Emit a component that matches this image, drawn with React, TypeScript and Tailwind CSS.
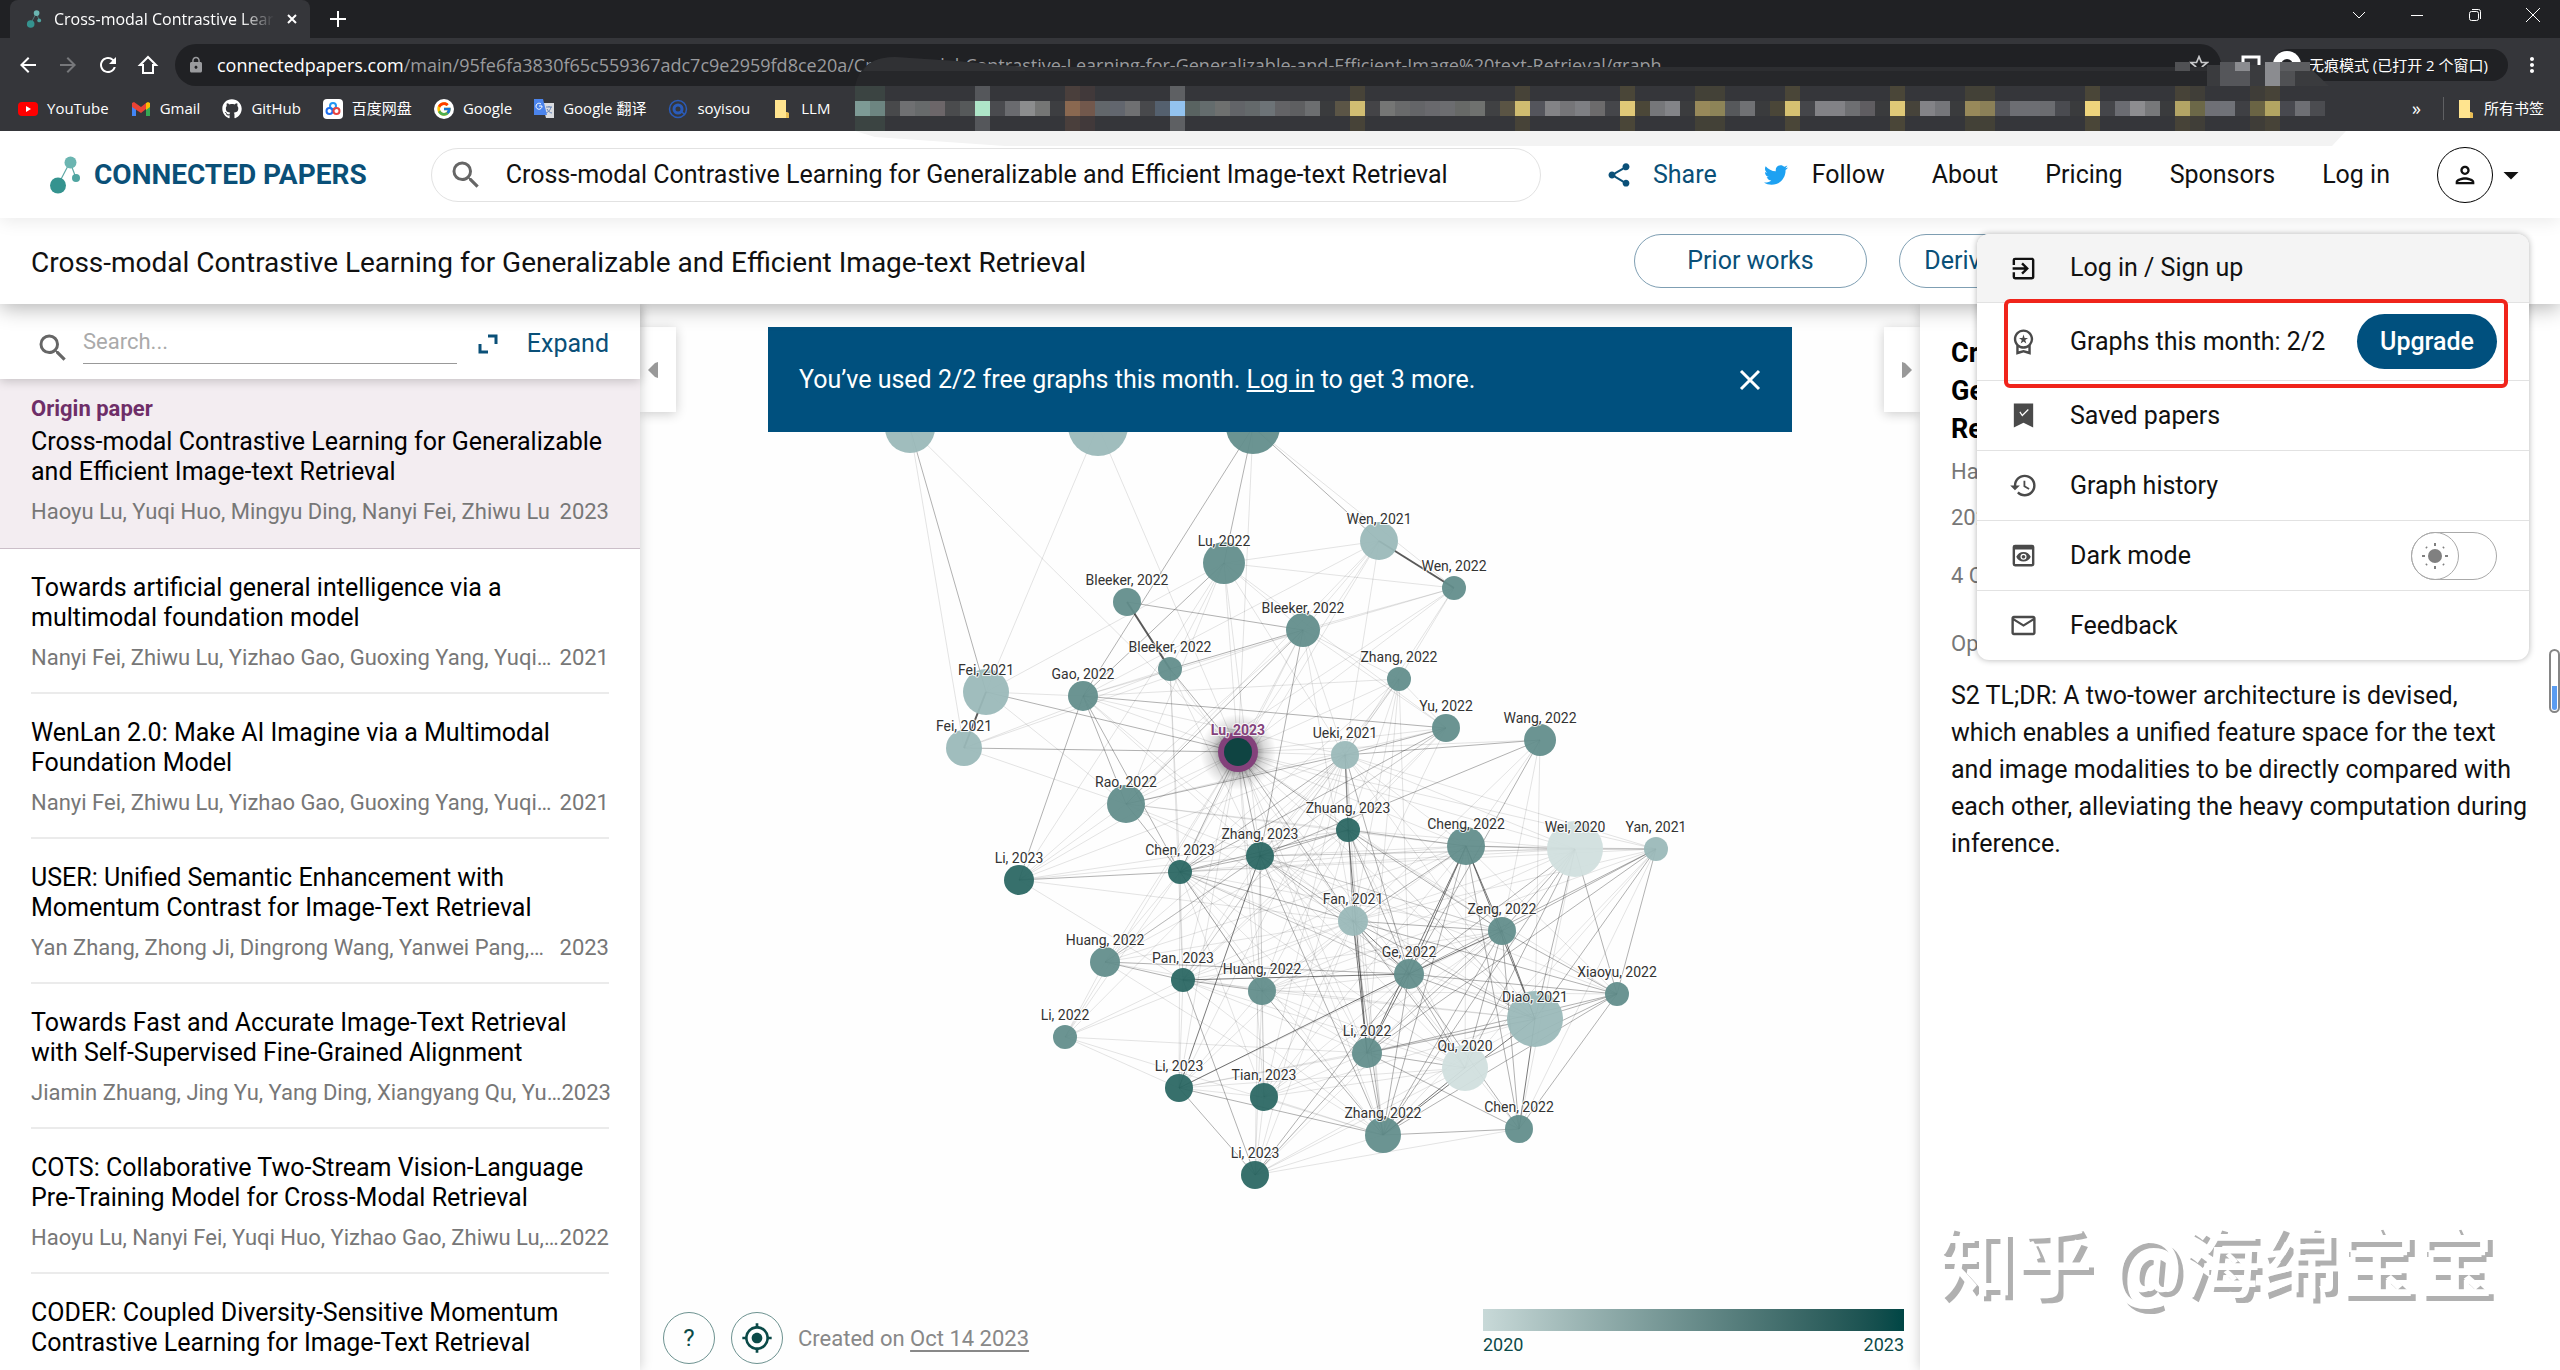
import { ReactNode } from 'react';
import {
  MdArrowBack, MdArrowForward, MdRefresh, MdLock, MdSearch, MdShare, MdOutlinePerson, MdArrowDropDown,
  MdExitToApp, MdOutlineWorkspacePremium, MdHistory, MdPreview, MdMailOutline, MdGpsFixed, MdMoreVert,
} from 'react-icons/md';
import { FaGithub, FaTwitter } from 'react-icons/fa';
import { FcGoogle } from 'react-icons/fc';

type Paper = { title: string; authors: string; year: number };

const origin: Paper = {
  title: 'Cross-modal Contrastive Learning for Generalizable and Efficient Image-text Retrieval',
  authors: 'Haoyu Lu, Yuqi Huo, Mingyu Ding, Nanyi Fei, Zhiwu Lu',
  year: 2023,
};

const papers: Paper[] = [
  { title: 'Towards artificial general intelligence via a multimodal foundation model', authors: 'Nanyi Fei, Zhiwu Lu, Yizhao Gao, Guoxing Yang, Yuqi…', year: 2021 },
  { title: 'WenLan 2.0: Make AI Imagine via a Multimodal Foundation Model', authors: 'Nanyi Fei, Zhiwu Lu, Yizhao Gao, Guoxing Yang, Yuqi…', year: 2021 },
  { title: 'USER: Unified Semantic Enhancement with Momentum Contrast for Image-Text Retrieval', authors: 'Yan Zhang, Zhong Ji, Dingrong Wang, Yanwei Pang,…', year: 2023 },
  { title: 'Towards Fast and Accurate Image-Text Retrieval with Self-Supervised Fine-Grained Alignment', authors: 'Jiamin Zhuang, Jing Yu, Yang Ding, Xiangyang Qu, Yu…', year: 2023 },
  { title: 'COTS: Collaborative Two-Stream Vision-Language Pre-Training Model for Cross-Modal Retrieval', authors: 'Haoyu Lu, Nanyi Fei, Yuqi Huo, Yizhao Gao, Zhiwu Lu,…', year: 2022 },
  { title: 'CODER: Coupled Diversity-Sensitive Momentum Contrastive Learning for Image-Text Retrieval', authors: 'Haoran Wang, Dongliang He, Wenhao Wu, Boyang Xia…', year: 2022 },
];

// id: [x, y, radius, year, label]
const nodes: Record<string, [number, number, number, number, string]> = {
  t1: [270, 124, 25, 2021, ''],
  t2: [458, 122, 30, 2021, ''],
  t3: [613, 123, 27, 2022, ''],
  lu22: [584, 259, 21, 2022, 'Lu, 2022'],
  ba: [487, 298, 14, 2022, 'Bleeker, 2022'],
  bb: [663, 326, 17, 2022, 'Bleeker, 2022'],
  bc: [530, 365, 12, 2022, 'Bleeker, 2022'],
  feiA: [346, 388, 23, 2021, 'Fei, 2021'],
  feiB: [324, 444, 18, 2021, 'Fei, 2021'],
  gao: [443, 392, 15, 2022, 'Gao, 2022'],
  rao: [486, 500, 19, 2022, 'Rao, 2022'],
  liA: [379, 576, 15, 2023, 'Li, 2023'],
  chA: [540, 568, 12, 2023, 'Chen, 2023'],
  zh23: [620, 552, 14, 2023, 'Zhang, 2023'],
  wen21: [739, 237, 19, 2021, 'Wen, 2021'],
  wen22: [814, 284, 12, 2022, 'Wen, 2022'],
  zhA: [759, 375, 12, 2022, 'Zhang, 2022'],
  yu: [806, 424, 14, 2022, 'Yu, 2022'],
  wang: [900, 436, 16, 2022, 'Wang, 2022'],
  ueki: [705, 451, 14, 2021, 'Ueki, 2021'],
  zhu: [708, 526, 12, 2023, 'Zhuang, 2023'],
  cheng: [826, 542, 19, 2022, 'Cheng, 2022'],
  wei: [935, 545, 28, 2020, 'Wei, 2020'],
  yan: [1016, 545, 12, 2021, 'Yan, 2021'],
  fan: [713, 617, 15, 2021, 'Fan, 2021'],
  zeng: [862, 627, 14, 2022, 'Zeng, 2022'],
  ge: [769, 670, 15, 2022, 'Ge, 2022'],
  huA: [465, 658, 15, 2022, 'Huang, 2022'],
  pan: [543, 676, 12, 2023, 'Pan, 2023'],
  huB: [622, 687, 14, 2022, 'Huang, 2022'],
  li22a: [425, 733, 12, 2022, 'Li, 2022'],
  li22b: [727, 749, 15, 2022, 'Li, 2022'],
  qu: [825, 764, 23, 2020, 'Qu, 2020'],
  diao: [895, 715, 28, 2021, 'Diao, 2021'],
  xia: [977, 690, 12, 2022, 'Xiaoyu, 2022'],
  li23b: [539, 784, 14, 2023, 'Li, 2023'],
  tian: [624, 793, 14, 2023, 'Tian, 2023'],
  zhB: [743, 831, 18, 2022, 'Zhang, 2022'],
  ch22: [879, 825, 14, 2022, 'Chen, 2022'],
  li23c: [615, 871, 14, 2023, 'Li, 2023'],
  lu: [598, 448, 14, 2023, 'Lu, 2023'],
};

const yearColor: Record<number, string> = { 2020: '#d0dfde', 2021: '#9ab9b9', 2022: '#628d8b', 2023: '#2a6763' };

const heavyEdges = 'ba-bc feiA-feiB wen21-wen22';
const strongEdges =
  'ge-li23b zeng-ge zeng-diao fan-ge fan-li22b zhu-li22b cheng-ge cheng-zeng cheng-li22b diao-ch22 diao-zhB qu-zhB zh23-li23b ge-pan ge-li22b cheng-diao';
const mediumEdges =
  't3-gao t3-lu22 gao-yu gao-liA gao-chA gao-rao lu22-gao ba-bb bc-bb bb-rao bb-zh23 feiA-lu feiB-lu rao-chA rao-ueki yu-ueki yu-chA wang-ueki wang-zh23 ' +
  'wang-ge cheng-fan cheng-zhu cheng-wei wei-yan wei-ge wei-diao wei-qu wei-xia wei-zeng yan-zeng yan-ge yan-diao yan-li22b yan-xia xia-diao xia-li22b ' +
  'xia-qu xia-zhB xia-ch22 xia-fan xia-ge xia-zeng zeng-fan zeng-li22b zeng-qu zeng-zhB zeng-ch22 zeng-zhu ge-qu ge-diao ge-zhB ge-ch22 ge-zhu ge-ueki ' +
  'fan-diao fan-qu fan-zhB fan-zh23 fan-chA li22b-diao li22b-qu li22b-zhB li22b-ch22 zhB-ch22 zhB-huB zhB-zh23 li23b-zhB li23b-li23c pan-huB pan-huA pan-li23c ' +
  'li22b-li23c ge-li23c cheng-ch22 cheng-zhB wei-zhB chA-zh23 chA-zhu zh23-zhu zh23-lu lu-zhu lu-fan lu-chA ueki-fan ueki-zhu ueki-chA lu-bc liA-chA huA-ge chA-huB t1-feiA t3-wen21';
const lightEdges =
  't1-feiB t1-lu t2-feiA t2-lu t3-wen22 t3-lu lu22-wen21 lu22-wen22 lu22-feiA lu22-lu lu22-yu lu22-ueki lu22-rao lu22-liA lu22-zh23 lu22-bb wen21-gao wen21-rao ' +
  'wen21-bb wen21-ueki wen21-lu wen21-chA wen22-lu wen22-zhA wen22-ueki wen22-rao wen22-bb wen22-gao bb-lu bb-liA bb-yu bb-ueki bb-zhA bb-chA bb-fan bb-feiB ' +
  'zhA-lu zhA-ueki zhA-chA zhA-zh23 zhA-yu zhA-gao zhA-fan zhA-pan zhA-li22b zhA-ge zhA-zhu bc-chA bc-gao bc-zh23 bc-lu22 bc-fan bc-pan bc-feiB feiA-gao feiA-rao feiB-rao ' +
  'gao-lu gao-ueki gao-zh23 gao-fan rao-lu rao-zhu rao-cheng rao-liA rao-fan rao-zh23 rao-yu liA-lu liA-zh23 liA-ueki liA-fan liA-zhu lu-ueki lu-ge lu-zeng lu-cheng lu-wei ' +
  'lu-li22b lu-pan lu-huA lu-huB lu-diao lu-li23b lu-tian lu-zhB lu-wang lu-yan lu-li22a yu-zhu yu-zh23 yu-huA yu-pan yu-lu yu-fan wang-cheng wang-fan wang-diao ' +
  'wang-zeng ueki-zh23 ueki-cheng ueki-wei ueki-yan ueki-huA ueki-pan ueki-huB ueki-li22b ueki-zhB ueki-diao ueki-zeng ueki-li23b ueki-li22a ueki-tian zhu-huA zhu-pan zhu-huB ' +
  'zhu-diao zhu-qu zhu-wei zhu-xia zhu-li23c zhu-zhB cheng-zh23 cheng-qu cheng-xia cheng-huB cheng-chA cheng-pan cheng-huA cheng-tian wei-fan wei-li22b wei-ch22 wei-zh23 ' +
  'wei-huB wei-chA yan-fan yan-cheng yan-zhB yan-huB yan-qu yan-ch22 fan-huB fan-pan fan-huA fan-li22a fan-tian fan-li23b fan-li23c fan-ch22 zeng-zh23 zeng-huB zeng-pan ' +
  'zeng-li23b zeng-chA zeng-tian ge-huB ge-zh23 ge-chA ge-tian pan-diao pan-zhB pan-li22b pan-qu pan-li23b pan-liA pan-li22a huA-zhB huA-li22a huA-huB huA-chA huA-zh23 ' +
  'huB-diao huB-li22b huB-tian huB-li23c huB-qu huB-xia huB-li23b huB-chA huB-zh23 li22a-li23b li22a-chA li22a-li22b li22a-zhB tian-li22b tian-qu tian-diao tian-zhB tian-li23c ' +
  'tian-chA tian-zh23 li23b-li22b li23b-diao li23b-qu li23b-tian li23b-chA li23c-zhB li23c-ch22 li23c-qu li23c-diao li23c-zeng li23c-zh23 zh23-li22b zh23-diao zh23-qu ' +
  'zh23-pan zh23-huA zh23-zeng zh23-ge zh23-wei zh23-xia chA-li22b chA-zhB chA-pan chA-qu chA-diao chA-ge chA-yan diao-zhu';

function Edges({ list, className }: { list: string; className: string }) {
  return (
    <g className={className}>
      {list.split(' ').map((edge) => {
        const [a, b] = edge.split('-');
        return <line key={edge} x1={nodes[a][0]} y1={nodes[a][1]} x2={nodes[b][0]} y2={nodes[b][1]} />;
      })}
    </g>
  );
}

function Graph() {
  return (
    <svg viewBox="0 0 1280 1066" className="block w-full" role="img" aria-label="Connected papers graph">
      <defs>
        <radialGradient id="glow">
          <stop offset="0.4" stopColor="#000" stopOpacity="0.45" />
          <stop offset="0.7" stopColor="#000" stopOpacity="0.14" />
          <stop offset="1" stopColor="#000" stopOpacity="0" />
        </radialGradient>
      </defs>
      <Edges list={lightEdges} className="stroke-[#222]/12" />
      <Edges list={mediumEdges} className="stroke-[#222]/35" />
      <Edges list={strongEdges} className="stroke-[#222]/60" />
      <Edges list={heavyEdges} className="stroke-[#222]/75 stroke-2" />
      <circle cx="598" cy="448" r="38" fill="url(#glow)" />
      <circle cx="598" cy="448" r="20" fill="#83417b" />
      {Object.entries(nodes).map(([id, [x, y, r, year]]) => (
        <circle key={id} cx={x} cy={y} r={r} fill={id === 'lu' ? '#07443f' : yearColor[year]} fillOpacity="0.94" />
      ))}
      <g className="fill-[#333] stroke-white/80 stroke-2 text-[14px] [paint-order:stroke]" textAnchor="middle">
        {Object.entries(nodes).map(([id, [x, y, , , label]]) => (
          <text key={id} x={x} y={y - 17} className={id === 'lu' ? 'fill-[#83417b] font-bold' : ''}>
            {label}
          </text>
        ))}
      </g>
    </svg>
  );
}

function Logo({ className }: { className: string }) {
  return (
    <svg viewBox="0 0 30 38" className={className} aria-hidden="true">
      <path d="M8 29 20 6l6 16" fill="none" stroke="#5fa9a6" strokeWidth="1.2" />
      <circle cx="20.500" cy="6.500" r="6" fill="#6bb5b1" />
      <circle cx="26" cy="22" r="4" fill="#4fa5a1" />
      <circle cx="8" cy="29.500" r="8" fill="#35938f" />
    </svg>
  );
}

function FolderIcon() {
  return (
    <svg viewBox="0 0 20 20" className="size-5" aria-hidden="true">
      <path d="M3 1h11v12l3 1v5H3z" fill="#ffe48f" />
      <path d="M14 13v6h3v-5z" fill="#e9be55" />
    </svg>
  );
}

const bookmarks: { label: string; icon: ReactNode }[] = [
  {
    label: 'YouTube',
    icon: (
      <svg viewBox="0 0 20 20" className="size-5">
        <rect y="3" width="20" height="14" rx="4" fill="#f00" />
        <path d="m8 7 5 3-5 3z" fill="#fff" />
      </svg>
    ),
  },
  {
    label: 'Gmail',
    icon: (
      <svg viewBox="0 0 20 20" className="size-5">
        <path d="M1 4v13h4V7z" fill="#4285f4" />
        <path d="M15 7v10h4V4z" fill="#34a853" />
        <path d="m15 4 2-1 2 1v4l-4 3z" fill="#fbbc04" />
        <path d="M1 4l2-1 7 5 5-4v6l-5 4-9-6z" fill="#ea4335" />
      </svg>
    ),
  },
  { label: 'GitHub', icon: <FaGithub className="size-5" /> },
  {
    label: '百度网盘',
    icon: (
      <svg viewBox="0 0 20 20" className="size-5">
        <rect width="20" height="20" rx="4" fill="#fff" />
        <g fill="none" strokeWidth="2">
          <circle cx="10" cy="7" r="3" stroke="#2196f3" />
          <circle cx="6.500" cy="12" r="3" stroke="#1e6ff0" />
          <circle cx="13.500" cy="12" r="3" stroke="#e8433f" />
        </g>
      </svg>
    ),
  },
  {
    label: 'Google',
    icon: (
      <span className="grid size-5 place-items-center rounded-full bg-white">
        <FcGoogle className="size-4" />
      </span>
    ),
  },
  {
    label: 'Google 翻译',
    icon: (
      <svg viewBox="0 0 20 20" className="size-5">
        <path d="M8 4h12v15h-8z" fill="#dadce0" />
        <path d="M12 8h6M15 7v1M17 8c-1 4-3 5-5 6M13 10c1 2 3 4 5 4" stroke="#5f7fb5" fill="none" />
        <path d="M0 0h9l4 16H0z" fill="#4b84ec" />
        <path d="M8 7H5M8 7a3 3 0 1 1-1-2" stroke="#fff" fill="none" />
      </svg>
    ),
  },
  {
    label: 'soyisou',
    icon: (
      <svg viewBox="0 0 20 20" className="size-5" fill="none" stroke="#2a5bb8">
        <circle cx="10" cy="10" r="8.500" strokeWidth="1.500" />
        <circle cx="10" cy="10" r="4" strokeWidth="3" />
        <path d="M14 9v4l3 3" strokeWidth="1.500" />
      </svg>
    ),
  },
  { label: 'LLM', icon: <FolderIcon /> },
];

// One colour per 15px block of the blurred bookmark strip
const strip = (
  '7d9a95 6d8581 48494b 6f7072 676a6b 6c6669 4a4b4d 56595a aee5c8 4a4b4f 6a6b6f 8c8d8e 757675 3d3e41 8a6850 72584c 62676b 62666e 6f7072 48494c 54606e 93c3ef ' +
  '596361 646c6d 6e706f 626468 64696b 6d7377 636366 5e5f61 6c6e70 3a3b3d 5b5546 d1bd72 444447 757675 696a6b 646568 69696d 6c6d70 676967 6f716f 404143 5a5444 ' +
  'd0bc70 54555c 838386 757578 7e7f83 6c6b6c 45464a e0c877 4b4738 76777a 838488 3b3c3e 98895a 8d8458 56585b 707174 3a3b3d 4a4638 d6c171 45464a 828286 828286 ' +
  '6e6f72 5f5d61 3a3b3d dfc877 46433a 838387 75767a 3a3b3d 98895a 8b8058 54555a 6d6e73 6d6e73 6b6c70 4a4b50 3a3b3d eed47c 45464a 6b6c72 8d8d90 77787a 3a3b3d ' +
  'b3a465 6c6848 6f7076 707278 3f4044 6a6444 b3a562 48494f 6e6f74 4b4c50'
).split(' ');
const bleeds: Record<number, string> = {
  0: '#3b4442', 1: '#3b4442', 8: '#55575b', 14: '#4a3f3c', 15: '#41393a', 21: '#5e6063', 33: '#474338', 44: '#474338', 51: '#4a4638', 56: '#434137', 57: '#434137',
  62: '#4a4638', 69: '#4a4638', 74: '#434137', 75: '#434137', 82: '#4a4638', 88: '#474338', 89: '#403e38', 93: '#3f3d38', 94: '#474338',
};

function BlurredStrip() {
  return (
    <svg viewBox="0 -16 1500 91" className="pointer-events-none absolute top-[55px] left-[855px] h-[91px] w-[1500px]" aria-hidden="true">
      <path d="M0 15Q6-14 40-14l60 4 70 6H1352v19z" fill="#26272a" />
      <path d="M8 0Q16-14 40-14l60 4 70 6v4z" fill="#303134" />
      <path d="M170-4H1352v4H170z" fill="#2d2e31" />
      <path d="M1352 15V-6h100l22 21z" fill="#3a3b3e" />
      <path d="M0 60h1491l-14 15H150L20 66z" fill="#f3f3f3" />
      {strip.map((c, i) => (
        <g key={i}>
          {bleeds[i] && <rect x={i * 15} y="15" width="15" height="45" fill={bleeds[i]} />}
          <rect x={i * 15} y="30" width="15" height="15" fill={'#' + c} />
        </g>
      ))}
      <rect x="1320" y="-9" width="15" height="9" fill="#505154" />
      <path d="M1365-9h30v24h-30z" fill="#55565a" />
      <path d="M1380-9h15v9h-15z" fill="#8b8c90" />
      <path d="M1410-9h15v24h-15z" fill="#8b8c90" />
      <path d="M1425-9h15v24h-15z" fill="#505154" />
      <path d="M1425-9h30v9h-30z" fill="#5c5d60" />
    </svg>
  );
}

function BrowserChrome() {
  return (
    <div className="relative bg-[#35363a] text-white [font-family:'Open_Sans','Noto_Sans_CJK_SC',sans-serif]">
      <div className="flex h-[38px] items-center bg-[#202124]">
        <div className="ml-[10px] flex h-full w-[300px] items-center rounded-t-lg bg-[#35363a] pr-3 pl-4 text-[16px]">
          <Logo className="mr-3 h-[18px] w-4" />
          <span className="flex-1 overflow-hidden whitespace-nowrap [mask-image:linear-gradient(to_right,#000_85%,transparent)]">
            Cross-modal Contrastive Learning
          </span>
          <button aria-label="Close tab" className="ml-3">
            <svg viewBox="0 0 12 12" className="size-3 stroke-white stroke-2"><path d="m2 2 8 8M10 2l-8 8" /></svg>
          </button>
        </div>
        <button aria-label="New tab" className="ml-5">
          <svg viewBox="0 0 16 16" className="size-4 stroke-white stroke-2"><path d="M8 0v16M0 8h16" /></svg>
        </button>
        <div className="mr-5 mb-2 ml-auto flex gap-11">
          <button aria-label="Search tabs"><svg viewBox="0 0 14 14" className="size-[14px] fill-none stroke-white"><path d="m1 4 6 6 6-6" /></svg></button>
          <button aria-label="Minimize"><svg viewBox="0 0 14 14" className="size-[14px] stroke-white"><path d="M1 7.500h12" /></svg></button>
          <button aria-label="Restore">
            <svg viewBox="0 0 14 14" className="size-[14px] fill-none stroke-white"><rect x="1.500" y="3.500" width="9" height="9" rx="2" /><path d="M4 1.500h6.500q2 0 2 2V11" /></svg>
          </button>
          <button aria-label="Close"><svg viewBox="0 0 14 14" className="size-[14px] stroke-white"><path d="m0 0 14 14M14 0 0 14" /></svg></button>
        </div>
      </div>
      <div className="flex h-12 items-center px-4 pt-[6px]">
        <div className="flex w-[159px] items-center gap-4">
          <button aria-label="Back"><MdArrowBack className="size-6" /></button>
          <button aria-label="Forward"><MdArrowForward className="size-6 text-[#77787b]" /></button>
          <button aria-label="Reload"><MdRefresh className="size-6" /></button>
          <button aria-label="Home"><svg viewBox="0 0 24 24" className="size-6 fill-none stroke-white stroke-2"><path d="M4 12 12 4l8 8h-3v8H7v-8z" /></svg></button>
        </div>
        <div className="flex h-[42px] flex-1 items-center rounded-full bg-[#202124] pl-3 text-[18px] whitespace-nowrap">
          <MdLock className="mr-3 size-[18px] text-[#9a9b9e]" />
          <span>connectedpapers.com</span>
          <span className="text-[#9a9b9e]">/main/95fe6fa3830f65c559367adc7c9e2959fd8ce20a/Cross-modal-Contrastive-Learning-for-Generalizable-and-Efficient-Image%20text-Retrieval/graph</span>
          <svg viewBox="0 0 24 24" className="mr-3 ml-auto size-5 fill-none stroke-[#c8c9cb] stroke-2"><path d="m12 2 3 7h7l-6 5 2 8-6-5-6 5 2-8-6-5h7z" /></svg>
        </div>
        <svg viewBox="0 0 20 20" className="ml-5 size-5 fill-none stroke-white stroke-3"><rect x="2" y="2" width="16" height="16" /></svg>
        <div className="ml-3 flex h-8 items-center rounded-full bg-[#202124] pr-5 text-[15px]">
          <span className="mr-2 grid size-7 place-items-center rounded-full bg-white"><span className="size-3 rounded-full bg-[#202124]" /></span>
          无痕模式 (已打开 2 个窗口)
        </div>
        <button aria-label="Menu" className="ml-3"><MdMoreVert className="size-6" /></button>
      </div>
      <div className="flex h-[45px] items-center gap-[22px] pr-4 pl-[18px] text-[15px]">
        {bookmarks.map((b) => (
          <a key={b.label} href="#" className="flex items-center gap-[9px] whitespace-nowrap">
            {b.icon}
            {b.label}
          </a>
        ))}
        <span className="ml-auto text-[18px]">»</span>
        <a href="#" className="flex items-center gap-2 border-l border-[#5f6063] pl-3">
          <FolderIcon />
          所有书签
        </a>
      </div>
      <BlurredStrip />
    </div>
  );
}

function MenuRow({ icon, children }: { icon: ReactNode; children: ReactNode }) {
  return (
    <div className="flex h-[70px] items-center border-t border-[#e2e2e2] px-8">
      <span className="mr-8 text-[29px] text-[#4a4a4a]">{icon}</span>
      {children}
    </div>
  );
}

function UserMenu() {
  return (
    <div className="absolute top-full right-[31px] z-40 mt-4 w-[552px] rounded-xl bg-white text-[25px] text-[#111] shadow-[0_0_6px_rgba(0,0,0,0.3)]">
      <button className="flex h-[68px] w-full items-center rounded-t-xl bg-[#f4f4f4] px-8">
        <MdExitToApp className="mr-8 size-[29px]" />
        Log in / Sign up
      </button>
      <div className="relative flex h-[78px] items-center border-t border-[#e2e2e2] px-8">
        <MdOutlineWorkspacePremium className="mr-8 size-[29px] text-[#4a4a4a]" />
        Graphs this month: 2/2
        <button className="ml-auto h-[55px] w-[140px] rounded-full bg-[#00507e] font-medium text-white">Upgrade</button>
        <div className="pointer-events-none absolute -top-1 right-[21px] -bottom-2 left-[27px] rounded-md border-4 border-[#f0241b]" />
      </div>
      <MenuRow
        icon={
          <svg viewBox="0 0 24 24" className="size-[29px]">
            <path d="M4 2h16v20l-8-4-8 4z" fill="currentColor" />
            <path d="m9 9 2 3 5-5" fill="none" stroke="#fff" />
          </svg>
        }
      >
        <a href="#">Saved papers</a>
      </MenuRow>
      <MenuRow icon={<MdHistory />}><a href="#">Graph history</a></MenuRow>
      <MenuRow icon={<MdPreview />}>
        <label htmlFor="dark-mode">Dark mode</label>
        <span className="relative ml-auto h-12 w-[86px]">
          <input id="dark-mode" type="checkbox" role="switch" className="block h-12 w-[86px] appearance-none rounded-full border border-[#aaa]" />
          <span className="pointer-events-none absolute top-0 left-0 grid size-12 place-items-center rounded-full border border-[#aaa]">
            <svg viewBox="0 0 28 28" className="size-7 stroke-[#808080] stroke-2">
              <circle cx="14" cy="14" r="7" fill="#808080" stroke="none" />
              <path d="M14 1v3M14 24v3M1 14h3M24 14h3M5 5l1 1M22 22l1 1M5 23l1-1M22 6l1-1" />
            </svg>
          </span>
        </span>
      </MenuRow>
      <MenuRow icon={<MdMailOutline />}><a href="#">Feedback</a></MenuRow>
    </div>
  );
}

function Header() {
  return (
    <header className="relative z-30 flex h-[87px] items-center bg-white pr-[39px] pl-[50px] text-[25px] text-[#111] shadow-[0_4px_16px_rgba(0,0,0,0.08)]">
      <a href="#" className="flex items-center gap-[14px] text-[28px] font-bold whitespace-nowrap text-[#0a5078]">
        <Logo className="h-[38px] w-[30px]" />
        CONNECTED PAPERS
      </a>
      <form className="mr-16 ml-16 flex h-[54px] flex-1 items-center rounded-full border border-[#e2e2e2] pl-4">
        <button type="button" aria-label="Search" className="mr-[22px]"><MdSearch className="size-9 text-[#666]" /></button>
        <input aria-label="Paper search" className="min-w-0 flex-1 outline-none" defaultValue={origin.title} />
      </form>
      <nav className="flex items-center gap-[47px] whitespace-nowrap">
        <a href="#" className="flex items-center gap-5 text-[#0a5078]">
          <MdShare className="size-7" />
          Share
        </a>
        <a href="#" className="flex items-center gap-6">
          <FaTwitter className="size-6 text-[#1da1f2]" />
          Follow
        </a>
        <a href="#">About</a>
        <a href="#">Pricing</a>
        <a href="#">Sponsors</a>
        <a href="#">Log in</a>
        <button aria-label="Account" className="flex items-center">
          <span className="grid size-14 place-items-center rounded-full border border-black"><MdOutlinePerson className="size-7" /></span>
          <MdArrowDropDown className="-mr-2 size-9" />
        </button>
      </nav>
      <UserMenu />
    </header>
  );
}

function PaperMeta({ paper }: { paper: Paper }) {
  return (
    <div className="mt-[11px] flex justify-between text-[22px] leading-[28px] whitespace-nowrap text-[#777]">
      <span>{paper.authors}</span>
      <span>{paper.year}</span>
    </div>
  );
}

function Sidebar() {
  return (
    <aside className="relative z-10 w-1/4 shrink-0 bg-white shadow-[0_0_12px_rgba(0,0,0,0.2)]">
      <div className="relative flex h-[75px] items-center bg-white px-[31px] pt-1 shadow-[0_2px_10px_rgba(0,0,0,0.2)]">
        <MdSearch className="mt-2 ml-1 size-9 text-[#666]" />
        <input aria-label="Search papers" placeholder="Search..." className="ml-3 h-10 min-w-0 flex-1 border-b border-[#999] pb-1 text-[22px] outline-none placeholder:text-[#aaa]" />
        <button className="ml-5 flex items-center gap-7 text-[25px] text-[#0a5078]">
          <svg viewBox="0 0 22 22" className="size-[22px] fill-none stroke-current stroke-3"><path d="M11 3h8v8M3 11v8h8" /></svg>
          Expand
        </button>
      </div>
      <div className="border-b border-[#cbbfc9] bg-[#f3edf1] px-[31px] pt-4 pb-[22px]">
        <div className="mb-1 text-[22px] leading-[28px] font-bold text-[#6e2e68]">Origin paper</div>
        <a href="#" className="block text-[25px] leading-[30px] text-black">{origin.title}</a>
        <PaperMeta paper={origin} />
      </div>
      <ul className="px-[31px]">
        {papers.map((p) => (
          <li key={p.title} className="border-b-2 border-[#ebebeb] pt-6 pb-5">
            <a href="#" className="block text-[25px] leading-[30px] text-black">{p.title}</a>
            <PaperMeta paper={p} />
          </li>
        ))}
      </ul>
    </aside>
  );
}

function Details() {
  return (
    <aside className="relative z-10 w-1/4 shrink-0 bg-white px-[31px] pt-[30px] text-[25px] leading-[37px] text-[#111] shadow-[0_0_12px_rgba(0,0,0,0.2)]">
      <h2 className="text-[27px] leading-[38px] font-bold text-black">
        Cross-modal Contrastive Learning for Generalizable and Efficient Image-text Retrieval
      </h2>
      <div className="text-[22px] leading-[38px] text-[#777]">
        <p className="mt-[5px] truncate">Haoyu Lu, Yuqi Huo, Mingyu Ding, Nanyi Fei</p>
        <p className="mt-2">2023, ArXiv</p>
        <p className="mt-5">4 Citations</p>
        <p className="mt-[30px]">Open in:</p>
      </div>
      <p className="mt-[14px]">
        S2 TL;DR: A two-tower architecture is devised, which enables a unified feature space for the text and image modalities to be directly compared with each
        other, alleviating the heavy computation during inference.
      </p>
    </aside>
  );
}

function Canvas() {
  return (
    <section className="relative min-w-0 flex-1 bg-[#fefefe]">
      <Graph />
      <button aria-label="Collapse list" className="absolute top-[23px] left-0 grid h-[85px] w-9 items-center bg-white pl-2 shadow-[0_2px_12px_rgba(0,0,0,0.2)]">
        <svg viewBox="0 0 10 16" className="h-4 w-[10px] fill-[#999]"><path d="M10 0v16L7 15 0 8l7-7z" /></svg>
      </button>
      <button aria-label="Collapse details" className="absolute top-[23px] right-0 grid h-[85px] w-9 items-center bg-white pl-[18px] shadow-[0_2px_12px_rgba(0,0,0,0.2)]">
        <svg viewBox="0 0 10 16" className="h-4 w-[10px] fill-[#999]"><path d="M0 0v16l3-1 7-7-7-7z" /></svg>
      </button>
      <div className="absolute inset-x-[10%] top-[23px] flex h-[105px] items-center justify-between bg-[#00507e] px-[31px] text-[25px] text-white">
        <span>You’ve used 2/2 free graphs this month. <a href="#" className="underline">Log in</a> to get 3 more.</span>
        <button aria-label="Dismiss"><svg viewBox="0 0 22 22" className="size-[22px] stroke-white stroke-3"><path d="m2 2 18 18M20 2 2 20" /></svg></button>
      </div>
      <div className="absolute bottom-[6px] left-[23px] flex items-center text-[22px] text-[#888]">
        <button aria-label="Help" className="size-[52px] rounded-full border border-[#6d9290] text-[24px] text-[#0b4a48]">?</button>
        <button aria-label="Center graph" className="mr-[15px] ml-4 grid size-[52px] place-items-center rounded-full border border-[#6d9290]">
          <MdGpsFixed className="size-8 text-[#0b4a48]" />
        </button>
        Created on&nbsp;<a href="#" className="underline underline-offset-4">Oct 14 2023</a>
      </div>
      <div className="absolute right-4 bottom-3 w-[421px] text-[18px] text-[#0b4a48]">
        <div className="h-[22px] bg-linear-to-r from-[#c8d9d8] to-[#004645]" />
        <div className="flex justify-between"><span>2020</span><span>2023</span></div>
      </div>
    </section>
  );
}

export default function App() {
  return (
    <div className="relative flex h-screen flex-col overflow-hidden bg-white [font-family:Roboto,'Noto_Sans_CJK_SC',sans-serif]">
      <div className="relative z-40"><BrowserChrome /></div>
      <Header />
      <div className="relative z-20 flex h-[86px] shrink-0 items-center bg-white pl-[31px] shadow-[0_4px_20px_rgba(0,0,0,0.3)]">
        <h1 className="flex-1 pt-1 text-[28px] text-[#111]">{origin.title}</h1>
        <div className="mr-[428px] flex gap-8 text-[25px] text-[#0a5078]">
          <button className="h-[54px] w-[233px] rounded-full border border-[#7f9fb3]">Prior works</button>
          <button className="h-[54px] w-[233px] rounded-full border border-[#7f9fb3]">Derivative works</button>
        </div>
      </div>
      <main className="flex min-h-0 flex-1">
        <Sidebar />
        <Canvas />
        <Details />
      </main>
      <div className="absolute right-[66px] bottom-[60px] z-20 text-[78px] leading-[88px] font-medium text-white [text-shadow:5px_5px_0_#b0b0b0]">知乎 @海绵宝宝</div>
      <div className="absolute top-[649px] right-0 z-20 flex h-16 w-[11px] items-end rounded-full border-2 border-[#858585] bg-white p-px">
        <div className="h-6 w-full rounded-b-full bg-[#5a9cf0]" />
      </div>
    </div>
  );
}
